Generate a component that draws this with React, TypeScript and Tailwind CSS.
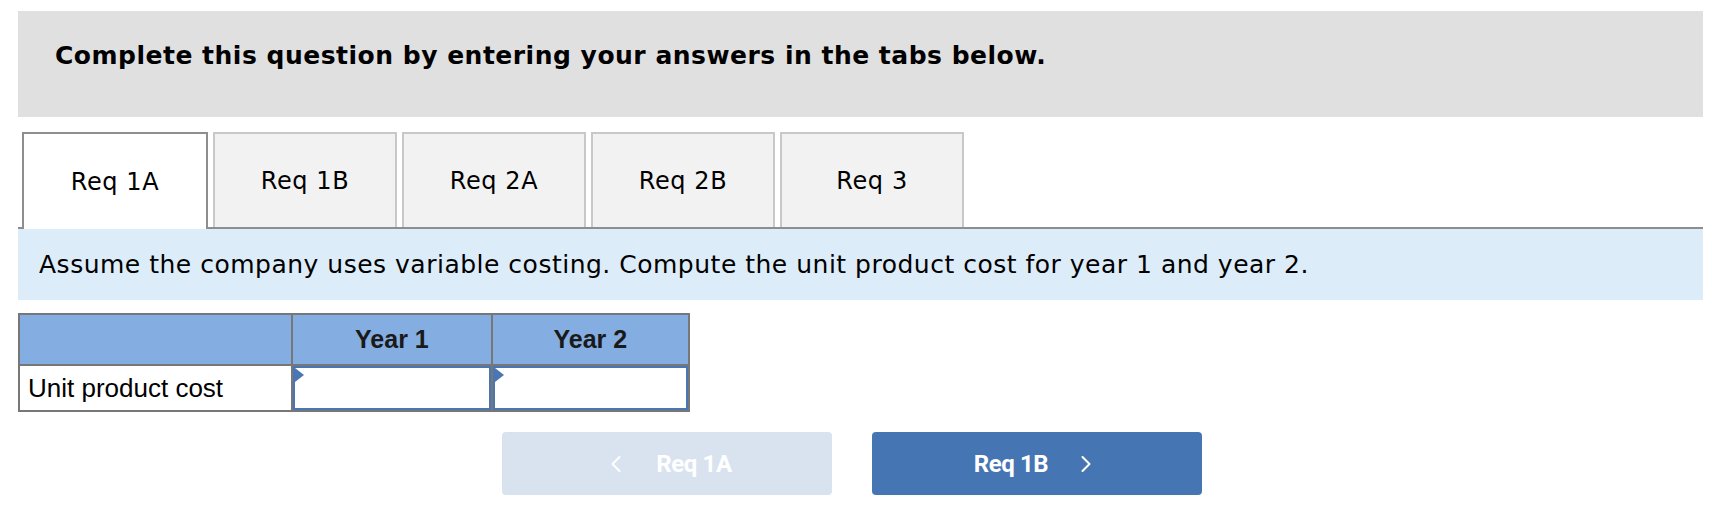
import { ChevronLeft, ChevronRight } from "lucide-react";

const tabs = ["Req 1A", "Req 1B", "Req 2A", "Req 2B", "Req 3"];

function InputCell() {
  return (
    <td className="relative h-[46px] border-2 border-[#777777] p-0">
      <div className="relative h-full w-full border-2 border-[#4a77b4] bg-white">
        <span className="absolute left-0 top-0 h-0 w-0 border-y-[7px] border-l-[9px] border-y-transparent border-l-[#4a77b4]" />
      </div>
    </td>
  );
}

export default function App() {
  return (
    <div className="min-h-[510px] bg-white pl-[18px] pr-[9px] pt-[11px] text-black">
      <div className="flex h-[106px] items-center bg-[#e0e0e0] pl-[37px] pb-[16px]">
        <h1 className="font-['DejaVu_Sans',Verdana,sans-serif] text-[25px] font-bold tracking-[0.5px]">
          Complete this question by entering your answers in the tabs below.
        </h1>
      </div>

      <div className="mt-[15px] flex items-end gap-[5px] pl-[4px]">
        {tabs.map((tab, i) => (
          <div
            key={tab}
            className={
              i === 0
                ? "relative z-10 -mb-[2px] flex h-[97px] w-[186px] items-center justify-center border-2 border-b-0 border-[#8e8e8e] bg-white font-['DejaVu_Sans',Verdana,sans-serif] text-[24px] tracking-[0.6px]"
                : "flex h-[95px] w-[184px] items-center justify-center border-2 border-b-0 border-[#c8c8c8] bg-[#f2f2f2] font-['DejaVu_Sans',Verdana,sans-serif] text-[24px] tracking-[0.6px]"
            }
          >
            {tab}
          </div>
        ))}
      </div>

      <div className="flex h-[73px] items-center border-t-2 border-[#8e8e8e] bg-[#ddecf9] pl-[21px]">
        <p className="font-['DejaVu_Sans',Verdana,sans-serif] text-[25px] tracking-[0.5px]">
          Assume the company uses variable costing. Compute the unit product cost for year 1 and year 2.
        </p>
      </div>

      <table className="mt-[13px] w-[672px] border-collapse font-['Liberation_Sans',Arial,sans-serif] text-[25px]">
        <thead>
          <tr className="h-[51px] bg-[#84ade1]">
            <th className="w-[274px] border-2 border-[#777777]" />
            <th className="w-[200px] border-2 border-[#777777] font-bold text-[#1a1a1a]">Year 1</th>
            <th className="w-[198px] border-2 border-[#777777] font-bold text-[#1a1a1a]">Year 2</th>
          </tr>
        </thead>
        <tbody>
          <tr>
            <td className="h-[46px] border-2 border-[#777777] pl-[8px] text-left text-[26px]">
              Unit product cost
            </td>
            <InputCell />
            <InputCell />
          </tr>
        </tbody>
      </table>

      <div className="mt-[20px] flex gap-[40px] pl-[484px] font-['Roboto',sans-serif] text-[24px] font-bold text-white">
        <button
          type="button"
          className="flex h-[63px] w-[330px] items-center justify-center gap-[26px] rounded-[4px] bg-[#d9e3ef]"
        >
          <ChevronLeft className="h-[28px] w-[28px]" strokeWidth={1.8} />
          <span className="tracking-[-0.4px]">Req 1A</span>
        </button>
        <button
          type="button"
          className="flex h-[63px] w-[330px] items-center justify-center gap-[24px] rounded-[4px] bg-[#4675b3]"
        >
          <span className="tracking-[-0.4px]">Req 1B</span>
          <ChevronRight className="h-[28px] w-[28px]" strokeWidth={1.8} />
        </button>
      </div>
    </div>
  );
}
